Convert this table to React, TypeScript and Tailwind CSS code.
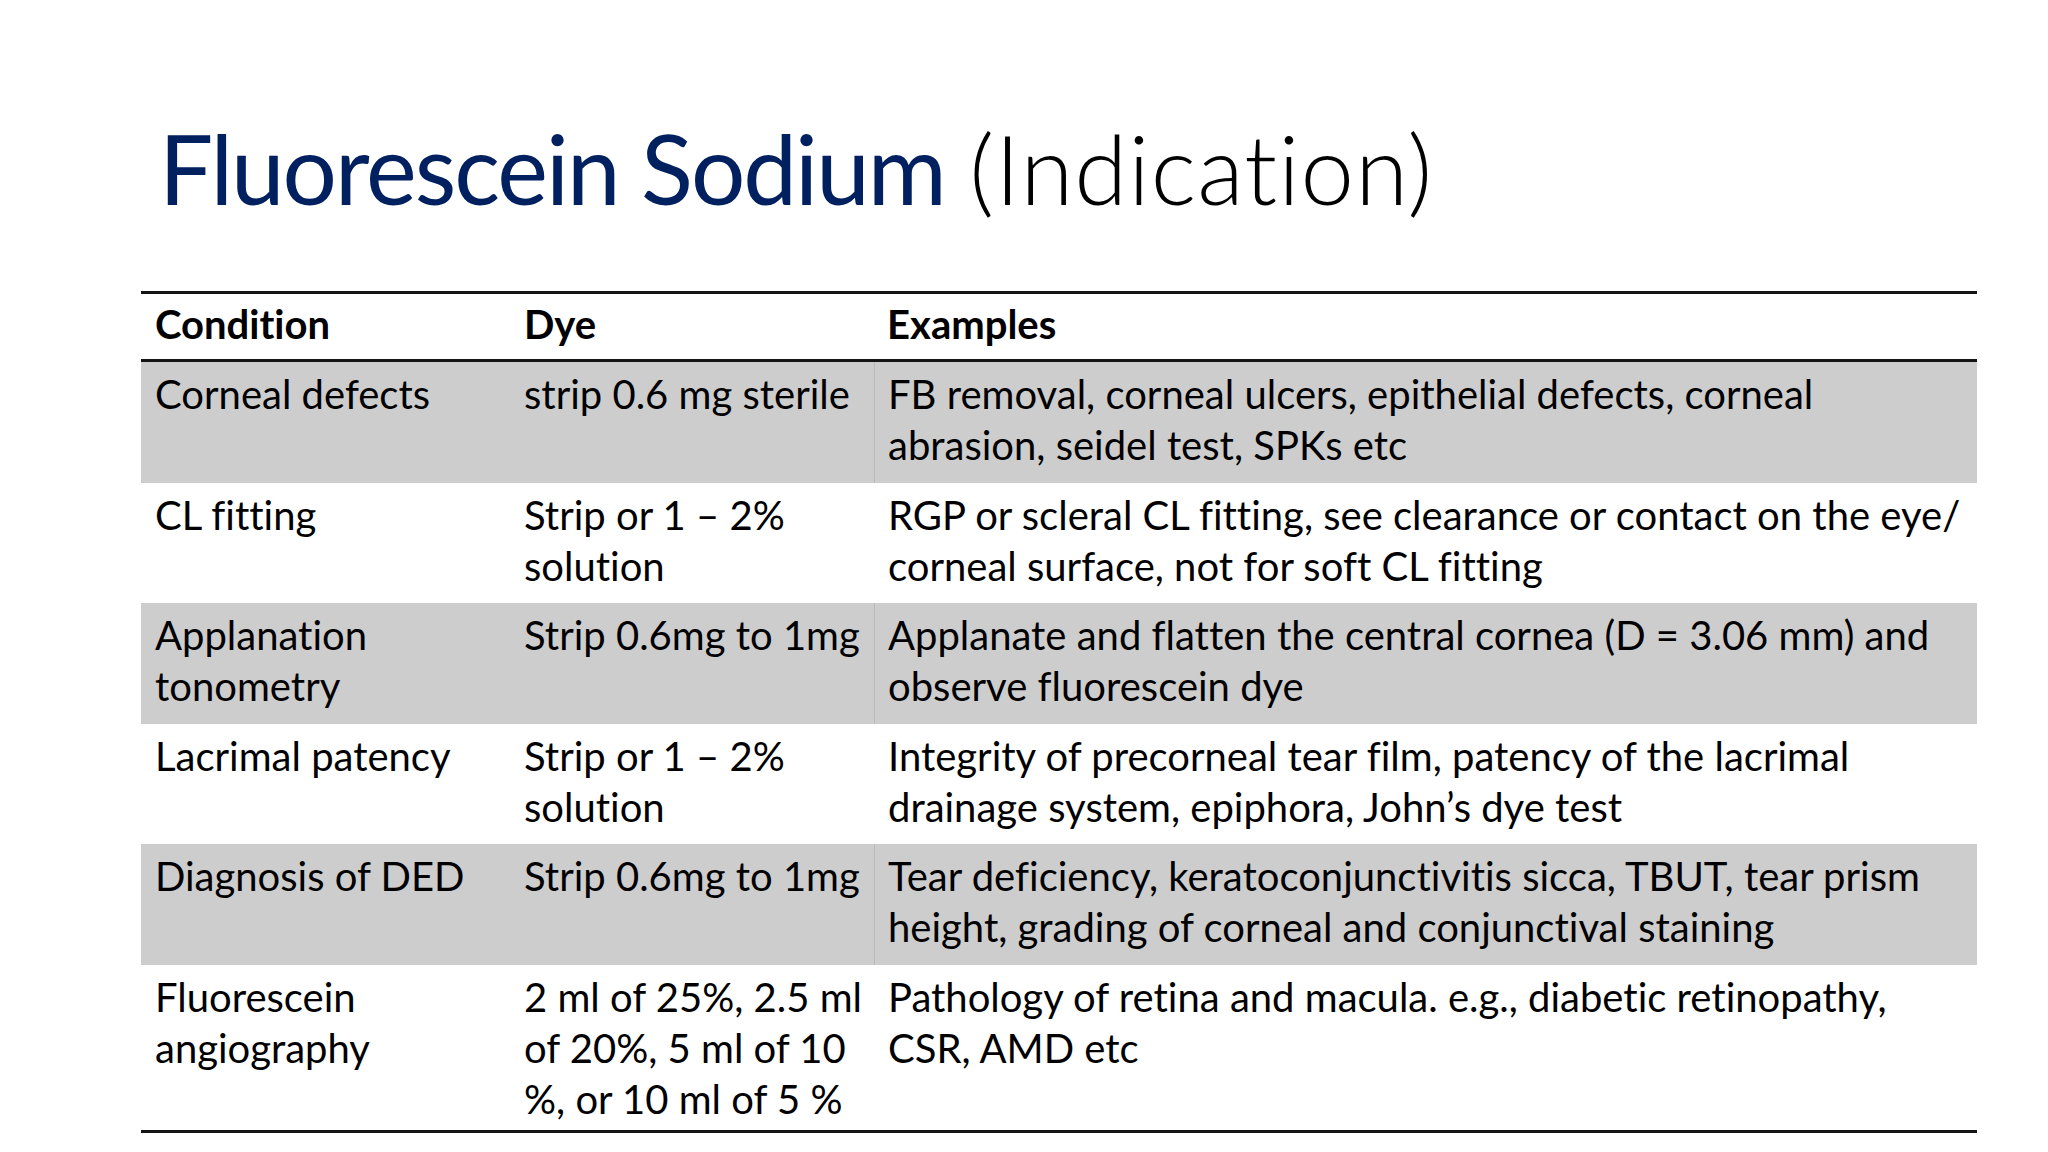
const rows = [
  {
    condition: ["Corneal defects"],
    dye: ["strip 0.6 mg sterile"],
    examples: ["FB removal, corneal ulcers, epithelial defects, corneal", "abrasion, seidel test, SPKs etc"],
  },
  {
    condition: ["CL fitting"],
    dye: ["Strip or 1 – 2%", "solution"],
    examples: ["RGP or scleral CL fitting, see clearance or contact on the eye/", "corneal surface, not for soft CL fitting"],
  },
  {
    condition: ["Applanation", "tonometry"],
    dye: ["Strip 0.6mg to 1mg"],
    examples: ["Applanate and flatten the central cornea (D = 3.06 mm) and", "observe fluorescein dye"],
  },
  {
    condition: ["Lacrimal patency"],
    dye: ["Strip or 1 – 2%", "solution"],
    examples: ["Integrity of precorneal tear film, patency of the lacrimal", "drainage system, epiphora, John’s dye test"],
  },
  {
    condition: ["Diagnosis of DED"],
    dye: ["Strip 0.6mg to 1mg"],
    examples: ["Tear deficiency, keratoconjunctivitis sicca, TBUT, tear prism", "height, grading of corneal and conjunctival staining"],
  },
  {
    condition: ["Fluorescein", "angiography"],
    dye: ["2 ml of 25%, 2.5 ml", "of 20%, 5 ml of 10", "%, or 10 ml of 5 %"],
    examples: ["Pathology of retina and macula. e.g., diabetic retinopathy,", "CSR, AMD etc"],
  },
]

function Lines({ lines }: { lines: string[] }) {
  return (
    <>
      {lines.map((l, i) => (
        <div key={i} className="whitespace-nowrap">{l}</div>
      ))}
    </>
  )
}

export default function App() {
  return (
    <div className="w-[2048px] h-[1152px] bg-white text-black overflow-hidden font-['Lato',sans-serif] [font-variant-ligatures:none]">
      <h1 className="pl-[159px] pt-[120px] text-[96px] leading-none whitespace-nowrap">
        <span className="text-[#002060] tracking-[-2px]">Fluorescein Sodium</span>{" "}
        <span className="font-light tracking-[1.1px]">(Indication)</span>
      </h1>

      <div className="ml-[141px] mt-[75px] w-[1836px] border-t-[3px] border-b-[3px] border-[#141414] text-[40px] leading-[51px]">
        {/* header */}
        <div className="grid grid-cols-[370px_363px_1103px] h-[68px] border-b-[3px] border-[#141414] font-bold">
          <div className="pl-[14px] pt-[5px]">Condition</div>
          <div className="pl-[13px] pt-[5px]">Dye</div>
          <div className="pl-[13px] pt-[5px]">Examples</div>
        </div>

        {rows.map((r, i) => {
          const gray = i % 2 === 0
          const last = i === rows.length - 1
          return (
            <div
              key={i}
              className={`grid grid-cols-[370px_363px_1103px] ${gray ? "bg-[#cdcdcd]" : "bg-white"} ${last ? "pb-[5px]" : "h-[120.6px]"}`}
            >
              <div className="pl-[14px] pt-[7px]">
                <Lines lines={r.condition} />
              </div>
              <div className="pl-[13px] pt-[7px]">
                <Lines lines={r.dye} />
              </div>
              <div className={`pl-[13px] pt-[7px] border-l ${gray ? "border-[#bababa]" : "border-white"}`}>
                <Lines lines={r.examples} />
              </div>
            </div>
          )
        })}
      </div>
    </div>
  )
}
